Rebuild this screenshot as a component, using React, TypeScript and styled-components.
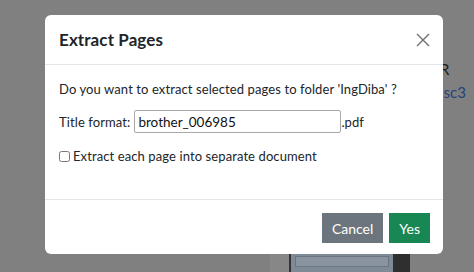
import React from 'react'
import styled, {createGlobalStyle} from 'styled-components'

const GlobalStyle = createGlobalStyle`
  html, body {
    margin: 0;
    padding: 0;
    width: 474px;
    height: 272px;
    overflow: hidden;
    background: #808080;
    font-family: Lato, "Noto Sans", sans-serif;
  }
`

// page that sits behind the dimmed backdrop
const Page = styled.div`
  position: relative;
  width: 474px;
  height: 272px;
  display: grid;
  grid-template-columns: 270px 140px 1fr;
  grid-template-rows: 1fr 28px;
`

const SideInfo = styled.div`
  grid-column: 3;
  grid-row: 1;
  padding: 60px 0 0 30px;
  display: flex;
  flex-direction: column;
  gap: 5px;
  font-size: 15px;
  color: #1c1c1c;
`

const SideLink = styled.span`
  color: #24427a;
`

const Thumb = styled.div`
  grid-column: 2;
  grid-row: 2;
  display: flex;
  background: #878787;
  padding-left: 19px;
  margin-top: 10px;
`

const ThumbFrame = styled.div`
  flex: 1;
  display: flex;
  border-left: 2px solid #333;
  background: #2f2f2f;
`

const ThumbInner = styled.div`
  width: 94px;
  background: #7f8a97;
  padding: 2px 4px;
`

const ThumbRow = styled.div`
  height: 9px;
  border: 1px solid #6c7480;
  background: #8a93a0;
`

const Backdrop = styled.div`
  position: absolute;
  inset: 0;
  padding: 15px 0 0 45px;
`

const Dialog = styled.div`
  width: 398px;
  height: 239px;
  background: #fff;
  border-radius: 6px;
  display: flex;
  flex-direction: column;
  color: #212529;
`

const Header = styled.div`
  height: 49px;
  display: flex;
  align-items: center;
  justify-content: space-between;
  padding: 0 12px 0 14px;
  border-bottom: 1px solid #e4e6e9;
`

const Title = styled.h5`
  margin: 0;
  font-size: 17px;
  font-weight: 700;
  letter-spacing: 0.1px;
`

const CloseButton = styled.button`
  border: 0;
  background: none;
  padding: 0;
  width: 16px;
  height: 16px;
  display: flex;
  cursor: pointer;
`

const Body = styled.div`
  flex: 1;
  padding: 15px 14px 0;
  display: flex;
  flex-direction: column;
  font-size: 13px;
  letter-spacing: 0.1px;
`

const Question = styled.p`
  margin: 0 0 12px;
  line-height: 18px;
`

const FormatRow = styled.div`
  display: flex;
  align-items: center;
  gap: 4px;
  margin-bottom: 15px;
`

const TitleInput = styled.input`
  width: 207px;
  height: 23px;
  box-sizing: border-box;
  border: 1px solid #a9a9a9;
  border-radius: 2px;
  padding: 0 3px;
  font-family: inherit;
  font-size: 13.5px;
  color: #111;
`

const Suffix = styled.span`
  margin-left: -4px;
`

const CheckRow = styled.label`
  display: flex;
  align-items: center;
  gap: 3px;
`

const Check = styled.input`
  margin: 0;
  width: 11px;
  height: 11px;
`

const Footer = styled.div`
  height: 55px;
  box-sizing: border-box;
  border-top: 1px solid #e4e6e9;
  display: flex;
  justify-content: flex-end;
  align-items: flex-start;
  gap: 6px;
  padding: 13px 13px 0 0;
`

const Button = styled.button<{$tone: 'secondary' | 'success'}>`
  height: 30px;
  border: 0;
  border-radius: 0;
  padding: 0 10px;
  font-family: inherit;
  font-size: 14px;
  color: #fff;
  background: ${(p) => (p.$tone === 'success' ? '#198754' : '#6c757d')};
`

export default function App() {
  return (
    <>
      <GlobalStyle />
      <Page>
        <SideInfo>
          <span>R</span>
          <SideLink>isc3</SideLink>
        </SideInfo>
        <Thumb>
          <ThumbFrame>
            <ThumbInner>
              <ThumbRow />
            </ThumbInner>
          </ThumbFrame>
        </Thumb>
        <Backdrop>
          <Dialog>
            <Header>
              <Title>Extract Pages</Title>
              <CloseButton aria-label="Close">
                <svg width="16" height="16" viewBox="0 0 16 16">
                  <path d="M2 2L14 14M14 2L2 14" stroke="#6f6f6f" strokeWidth="1.4" />
                </svg>
              </CloseButton>
            </Header>
            <Body>
              <Question>Do you want to extract selected pages to folder 'IngDiba' ?</Question>
              <FormatRow>
                <span>Title format:</span>
                <TitleInput defaultValue="brother_006985" />
                <Suffix>.pdf</Suffix>
              </FormatRow>
              <CheckRow>
                <Check type="checkbox" />
                Extract each page into separate document
              </CheckRow>
            </Body>
            <Footer>
              <Button $tone="secondary">Cancel</Button>
              <Button $tone="success">Yes</Button>
            </Footer>
          </Dialog>
        </Backdrop>
      </Page>
    </>
  )
}
